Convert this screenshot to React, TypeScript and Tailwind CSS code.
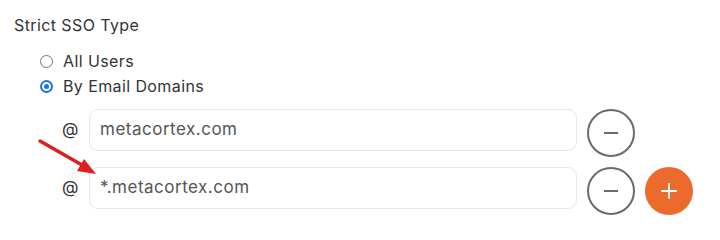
import React, { useState } from 'react';

const MinusButton: React.FC = () => (
  <button
    type="button"
    className="w-[48px] h-[48px] shrink-0 rounded-full border-2 border-[#6b6b6b] bg-white flex items-center justify-center"
  >
    <span className="block w-[14px] h-[2px] bg-[#6b6b6b]" />
  </button>
);

const DomainRow: React.FC<{ value: string }> = ({ value }) => (
  <div className="flex items-start h-[48px]">
    <span className="w-[75px] pl-[48px] pt-[8px] text-[17px] text-[#333]">@</span>
    <div className="w-[488px] h-[42px] rounded-[9px] border border-[#e6e6e6] bg-white flex items-center pl-[10px] text-[17px] tracking-[0.5px] text-[#555]">
      {value}
    </div>
    <div className="ml-[10px]">
      <MinusButton />
    </div>
  </div>
);

const App: React.FC = () => {
  const [mode, setMode] = useState<'all' | 'domains'>('domains');

  return (
    <div className="relative w-[720px] h-[240px] bg-white font-['Inter',sans-serif] text-[#333] pl-[14px] pt-[14px]">
      <div className="text-[16px] leading-[22px] tracking-[0.4px]">Strict SSO Type</div>

      <div className="mt-[14px] pl-[26px] flex flex-col gap-[3px]">
        <label className="flex items-center gap-[10px] h-[22px] cursor-pointer" onClick={() => setMode('all')}>
          <span
            className={`w-[13px] h-[13px] rounded-full flex items-center justify-center ${
              mode === 'all' ? 'border-2 border-[#1a73e8]' : 'border border-[#767676]'
            }`}
          >
            {mode === 'all' && <span className="w-[5px] h-[5px] rounded-full bg-[#1a73e8]" />}
          </span>
          <span className="text-[16px] tracking-[0.4px]">All Users</span>
        </label>
        <label className="flex items-center gap-[10px] h-[22px] cursor-pointer" onClick={() => setMode('domains')}>
          <span
            className={`w-[13px] h-[13px] rounded-full flex items-center justify-center ${
              mode === 'domains' ? 'border-2 border-[#1a73e8]' : 'border border-[#767676]'
            }`}
          >
            {mode === 'domains' && <span className="w-[5px] h-[5px] rounded-full bg-[#1a73e8]" />}
          </span>
          <span className="text-[16px] tracking-[0.4px]">By Email Domains</span>
        </label>
      </div>

      <div className="mt-[12px] flex flex-col gap-[10px]">
        <DomainRow value="metacortex.com" />
        <div className="flex items-start">
          <DomainRow value="*.metacortex.com" />
          <button
            type="button"
            className="ml-[10px] w-[48px] h-[48px] shrink-0 rounded-full bg-[#ec6a2c] flex items-center justify-center"
          >
            <svg width="16" height="16" viewBox="0 0 16 16">
              <path d="M8 1v14M1 8h14" stroke="white" strokeWidth="2" strokeLinecap="round" />
            </svg>
          </button>
        </div>
      </div>

      {/* annotation arrow */}
      <svg className="absolute left-0 top-0" width="720" height="240" viewBox="0 0 720 240">
        <line x1="40" y1="141" x2="82" y2="165" stroke="#e01e1e" strokeWidth="3.5" strokeLinecap="round" />
        <polygon points="96,174 77,171 84,159" fill="#e01e1e" />
      </svg>
    </div>
  );
};

export default App;
